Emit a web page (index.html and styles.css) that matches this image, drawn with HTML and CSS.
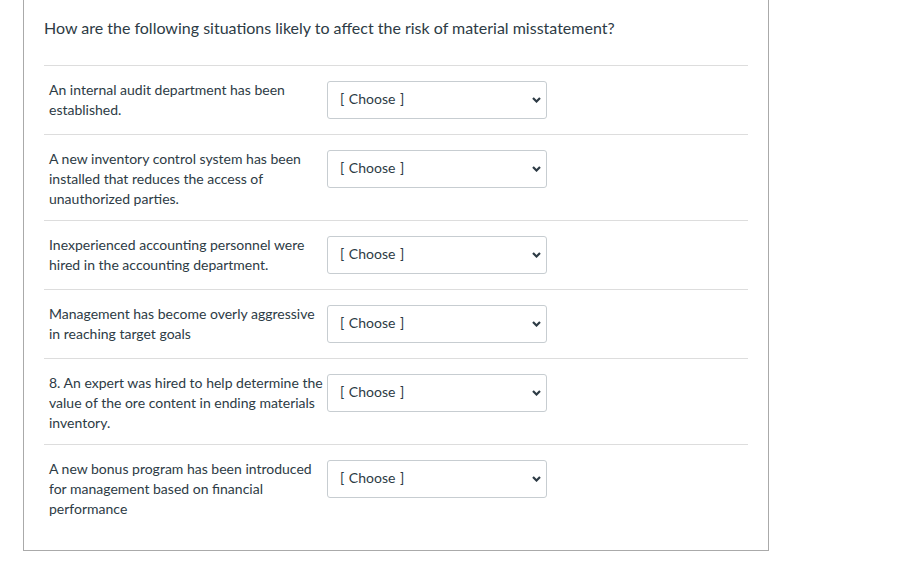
FILE: index.html
```html
<!DOCTYPE html>
<html>
<head>
<meta charset="utf-8">
<link rel="stylesheet" href="styles.css">
</head>
<body>
<div class="quiz">
  <p class="question">How are the following situations likely to affect the risk of material misstatement?</p>
  <div class="rows">
    <div class="row">
      <div class="label">An internal audit department has been established.</div>
      <div class="pick"><select><option>[ Choose ]</option></select><svg class="chev" width="9" height="6" viewBox="0 0 9 6"><path d="M1 1 L4.5 4.5 L8 1" fill="none" stroke="#2d3b45" stroke-width="2.2"/></svg></div>
    </div>
    <div class="row">
      <div class="label">A new inventory control system has been installed that reduces the access of unauthorized parties.</div>
      <div class="pick"><select><option>[ Choose ]</option></select><svg class="chev" width="9" height="6" viewBox="0 0 9 6"><path d="M1 1 L4.5 4.5 L8 1" fill="none" stroke="#2d3b45" stroke-width="2.2"/></svg></div>
    </div>
    <div class="row">
      <div class="label">Inexperienced accounting personnel were hired in the accounting department.</div>
      <div class="pick"><select><option>[ Choose ]</option></select><svg class="chev" width="9" height="6" viewBox="0 0 9 6"><path d="M1 1 L4.5 4.5 L8 1" fill="none" stroke="#2d3b45" stroke-width="2.2"/></svg></div>
    </div>
    <div class="row">
      <div class="label">Management has become overly aggressive in reaching target goals</div>
      <div class="pick"><select><option>[ Choose ]</option></select><svg class="chev" width="9" height="6" viewBox="0 0 9 6"><path d="M1 1 L4.5 4.5 L8 1" fill="none" stroke="#2d3b45" stroke-width="2.2"/></svg></div>
    </div>
    <div class="row">
      <div class="label">8. An expert was hired to help determine the value of the ore content in ending materials inventory.</div>
      <div class="pick"><select><option>[ Choose ]</option></select><svg class="chev" width="9" height="6" viewBox="0 0 9 6"><path d="M1 1 L4.5 4.5 L8 1" fill="none" stroke="#2d3b45" stroke-width="2.2"/></svg></div>
    </div>
    <div class="row">
      <div class="label">A new bonus program has been introduced for management based on financial performance</div>
      <div class="pick"><select><option>[ Choose ]</option></select><svg class="chev" width="9" height="6" viewBox="0 0 9 6"><path d="M1 1 L4.5 4.5 L8 1" fill="none" stroke="#2d3b45" stroke-width="2.2"/></svg></div>
    </div>
  </div>
</div>
</body>
</html>
```
FILE: styles.css
```css
html, body {
  margin: 0;
  padding: 0;
  background: #fff;
}
body {
  font-family: Lato, "Liberation Sans", sans-serif;
  color: #2d3b45;
}
.quiz {
  margin-left: 23px;
  width: 704px;
  border: 1px solid #aaa;
  border-top: none;
  padding: 16px 20px 20px 20px;
}
.question {
  margin: 0;
  font-size: 16px;
  line-height: 24px;
  padding-bottom: 25px;
  border-bottom: 1px solid #ddd;
}
.row {
  display: flex;
  align-items: flex-start;
  padding: 14px 0 11px 5px;
  border-bottom: 1px solid #ddd;
}
.row:last-child {
  border-bottom: none;
}
.label {
  width: 278px;
  font-size: 14px;
  line-height: 20px;
}
.pick {
  position: relative;
  margin: 1px 0 4px 0;
}
.pick select {
  appearance: none;
  -webkit-appearance: none;
  width: 220px;
  height: 38px;
  border: 1px solid #c7cdd1;
  border-radius: 3px;
  background: #fff;
  padding: 0 12px 3px 12px;
  font-family: Lato, "Liberation Sans", sans-serif;
  font-size: 14px;
  word-spacing: 1px;
  color: #2d3b45;
}
.chev {
  position: absolute;
  right: 6px;
  top: 16px;
}
```
